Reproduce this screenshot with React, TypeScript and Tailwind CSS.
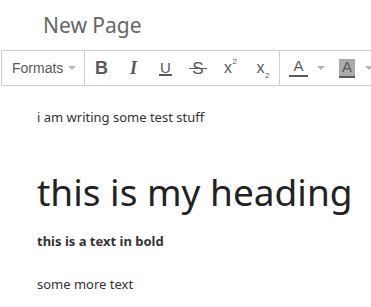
import React from "react";

const Caret = () => (
  <span className="inline-block w-0 h-0 border-l-[4px] border-r-[4px] border-t-[4px] border-l-transparent border-r-transparent border-t-[#b5b5b5]" />
);

export default function App() {
  return (
    <div className="w-[371px] h-[307px] bg-white overflow-hidden relative" style={{ fontFamily: "'Noto Sans', 'Open Sans', sans-serif" }}>
      <div className="pl-[43px] pt-[11px] h-[50px] text-[21px] text-[#666] leading-[28px]" style={{ fontFamily: "'Noto Sans', sans-serif" }}>New Page</div>
      <div className="ml-[1px] w-[400px] h-[36px] border-t border-b border-l border-[#d0d0d0] flex items-center text-[#595959]" style={{ fontFamily: "'Liberation Sans', Arial, sans-serif" }}>
        <div className="w-[83px] h-full flex items-center border-r border-[#d0d0d0] pl-[10px] gap-[5px] text-[14px]">
          <span>Formats</span>
          <Caret />
        </div>
        <div className="w-[195px] h-full flex items-center border-r border-[#d0d0d0]">
          <div className="w-[33px] flex justify-center font-bold text-[18px] leading-none">B</div>
          <div className="w-[31px] flex justify-center italic font-bold text-[18px] leading-none" style={{ fontFamily: "'Liberation Serif', serif" }}>I</div>
          <div className="w-[33px] flex justify-center">
            <span className="text-[15px] leading-[13px] border-b-[2px] border-[#595959] px-[1px]">U</span>
          </div>
          <div className="w-[32px] flex justify-center">
            <span className="relative text-[17px] leading-none px-[3px]">S<span className="absolute left-0 right-0 top-[8px] h-[1.5px] bg-[#595959]" /></span>
          </div>
          <div className="w-[32px] flex justify-center text-[16px] leading-none">
            <span className="relative pr-[4px]">x<span className="absolute right-[-1px] top-[-2px] text-[8px]">2</span></span>
          </div>
          <div className="w-[33px] flex justify-center text-[16px] leading-none">
            <span className="relative pr-[4px]">x<span className="absolute right-[-1px] bottom-[-4px] text-[8px]">2</span></span>
          </div>
        </div>
        <div className="flex items-center h-full">
          <div className="w-[33px] flex justify-center pl-[4px]">
            <span className="text-[15px] leading-[14px] pb-[2px] border-b-[2px] border-[#595959] px-[4px]">A</span>
          </div>
          <div className="w-[16px] flex justify-center"><Caret /></div>
          <div className="w-[34px] flex justify-center pl-[2px]">
            <span className="text-[15px] leading-[14px] bg-[#aaa] pt-[1px] pb-[2px] px-[3px] border-b-[2px] border-[#595959]">A</span>
          </div>
          <div className="w-[12px] flex justify-center"><Caret /></div>
        </div>
      </div>
      <div className="pl-[37px] text-[#333] text-[13px]" style={{ fontFamily: "'Noto Sans', sans-serif" }}>
        <p className="mt-[22px] leading-[18px]">i am writing some test stuff</p>
        <h1 className="mt-[43px] text-[37px] leading-[46px] text-[#222]">this is my heading</h1>
        <p className="mt-[17px] font-bold leading-[18px]">this is a text in bold</p>
        <p className="mt-[25px] leading-[18px]">some more text</p>
      </div>
    </div>
  );
}
